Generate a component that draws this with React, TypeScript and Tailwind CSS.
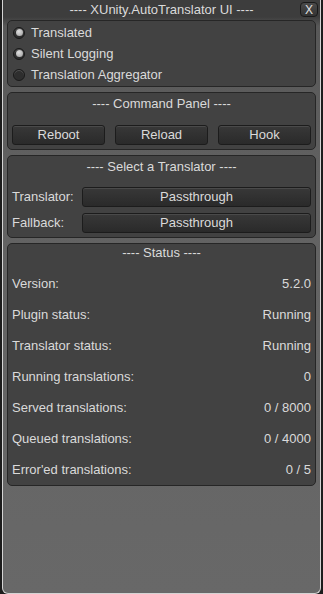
const font = { fontFamily: '"Liberation Sans", Arial, sans-serif' };

function Radio({ on, label }: { on: boolean; label: string }) {
  return (
    <div className="flex h-[21px] items-center">
      <span className="ml-[1px] flex h-[12px] w-[12px] items-center justify-center rounded-full border border-[#1a1a1a] bg-[#2e2e2e] shadow-[inset_0_1px_0_#555]">
        {on && <span className="h-[7px] w-[7px] rounded-full bg-[radial-gradient(circle_at_40%_35%,#e0e0e0,#9a9a9a)]" />}
      </span>
      <span className="ml-[6px]">{label}</span>
    </div>
  );
}

function Btn({ children, className = "" }: { children: React.ReactNode; className?: string }) {
  return (
    <div
      className={
        "flex h-[20px] items-center justify-center rounded-[3px] border border-[#1c1c1c] bg-[linear-gradient(to_bottom,#383838,#2a2a2a)] shadow-[inset_0_1px_0_#4a4a4a] " +
        className
      }
    >
      {children}
    </div>
  );
}

function Box({ children, className = "" }: { children: React.ReactNode; className?: string }) {
  return (
    <div className={"rounded-[5px] border border-[#262626] bg-[#424242] px-[4px] " + className}>
      {children}
    </div>
  );
}

const stats: [string, string][] = [
  ["Version:", "5.2.0"],
  ["Plugin status:", "Running"],
  ["Translator status:", "Running"],
  ["Running translations:", "0"],
  ["Served translations:", "0 / 8000"],
  ["Queued translations:", "0 / 4000"],
  ["Error'ed translations:", "0 / 5"],
];

export default function App() {
  return (
    <div className="h-[594px] w-[323px] bg-[#1c1c1c] pl-[2px] pr-[2px] text-[13px] text-[#dadada]" style={font}>
      <div className="flex h-full flex-col rounded-b-[6px] border-x border-b border-[#d4d4d4] bg-[linear-gradient(to_bottom,#3d3d3d_0px,#3d3d3d_17px,#585858_26px,#626262_200px,#686868_100%)] px-[4px]">
        <div className="relative flex h-[20px] items-center justify-center">
          <span>---- XUnity.AutoTranslator UI ----</span>
          <div className="absolute right-[-2px] top-[2px] flex h-[15px] w-[18px] items-center justify-center rounded-[4px] border border-[#1a1a1a] bg-[linear-gradient(to_bottom,#4a4a4a,#333)] text-[12px] text-[#e0e0e0]">
            X
          </div>
        </div>

        <Box className="py-[1px]">
          <Radio on label="Translated" />
          <Radio on label="Silent Logging" />
          <Radio on={false} label="Translation Aggregator" />
        </Box>

        <Box className="mt-[5px] pb-[4px] pt-[2px]">
          <div className="flex h-[18px] items-center justify-center">---- Command Panel ----</div>
          <div className="mt-[12px] grid grid-cols-3 gap-[10px]">
            <Btn>Reboot</Btn>
            <Btn>Reload</Btn>
            <Btn>Hook</Btn>
          </div>
        </Box>

        <Box className="mt-[5px] pb-[4px] pt-[2px]">
          <div className="flex h-[18px] items-center justify-center">---- Select a Translator ----</div>
          <div className="mt-[11px] flex items-center">
            <span className="w-[70px]">Translator:</span>
            <Btn className="flex-1">Passthrough</Btn>
          </div>
          <div className="mt-[6px] flex items-center">
            <span className="w-[70px]">Fallback:</span>
            <Btn className="flex-1">Passthrough</Btn>
          </div>
        </Box>

        <Box className="mt-[5px]">
          <div className="flex h-[18px] items-center justify-center">---- Status ----</div>
          <div className="mt-[6px]">
            {stats.map(([k, v]) => (
              <div key={k} className="flex h-[31px] items-center justify-between">
                <span>{k}</span>
                <span>{v}</span>
              </div>
            ))}
          </div>
        </Box>
      </div>
    </div>
  );
}
